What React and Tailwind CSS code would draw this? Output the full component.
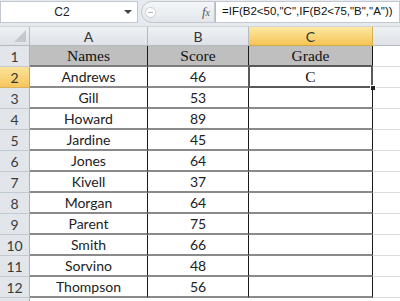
import React from 'react'

const data = [
  ['Andrews', 46, 'C'],
  ['Gill', 53],
  ['Howard', 89],
  ['Jardine', 45],
  ['Jones', 64],
  ['Kivell', 37],
  ['Morgan', 64],
  ['Parent', 75],
  ['Smith', 66],
  ['Sorvino', 48],
  ['Thompson', 56],
]

const sans = { fontFamily: 'Lato, "Liberation Sans", sans-serif' }

function RowHead({ n, active }) {
  return (
    <div
      className={`w-[30px] shrink-0 flex items-center justify-center text-[14px] border-r border-b ${
        active
          ? 'bg-gradient-to-b from-[#fbe39a] to-[#f6c65c] text-[#333] border-r-[#c9a34a] border-b-[#d7b45c]'
          : 'bg-[#e2e6eb] text-[#3a3a3a] border-r-[#a9b1bb] border-b-[#c3c9d0]'
      }`}
    >
      {n}
    </div>
  )
}

export default function App() {
  return (
    <div className="w-[400px] h-[301px] overflow-hidden bg-white text-[#222]" style={sans}>
      {/* formula bar */}
      <div className="h-[27px] bg-[#e6e9ee] flex items-start pt-[1px] border-b border-[#cfd4da]">
        <div className="w-[138px] h-[22px] bg-white border border-[#c2c8cf] flex items-center">
          <div className="flex-1 text-center text-[12px] text-[#222] pl-[2px]" style={{ fontFamily: '"Liberation Sans", sans-serif' }}>C2</div>
          <svg width="14" height="8" viewBox="0 0 14 8" className="mr-[2px]">
            <path d="M3 2 L11 2 L7 6 Z" fill="#444" />
          </svg>
        </div>
        <div className="w-[74px] h-[22px] ml-[3px] flex items-center bg-gradient-to-b from-[#f4f6f8] to-[#e3e7ec] border border-[#c2c8cf] rounded-l-full">
          <div className="w-[11px] h-[11px] ml-[3px] rounded-full border border-[#c9ced4] bg-white flex items-center justify-center">
            <div className="w-[5px] h-[1px] bg-[#b0b6bd]" />
          </div>
          <div className="flex-1" />
          <span className="italic text-[13px] text-[#555] mr-[4px]" style={{ fontFamily: '"Liberation Serif", serif' }}>
            f<span className="text-[10px]">x</span>
          </span>
        </div>
        <div className="flex-1 h-[22px] bg-white border border-[#c2c8cf] border-l-[#b5bbc3] flex items-center pl-[6px]">
          <span className="text-[11.5px] text-[#111] whitespace-nowrap" style={{ fontFamily: '"Liberation Sans", sans-serif' }}>
            =IF(B2&lt;50,"C",IF(B2&lt;75,"B","A"))
          </span>
        </div>
      </div>

      {/* column headers */}
      <div className="flex h-[19px]">
        <div className="w-[30px] shrink-0 bg-gradient-to-b from-[#eef1f4] to-[#dfe3e8] border-r border-b border-r-[#b3bac3] border-b-[#b3bac3] relative">
          <svg width="14" height="14" viewBox="0 0 14 14" className="absolute right-[2px] bottom-[2px]">
            <path d="M13 1 L13 13 L1 13 Z" fill="#c4c9cf" />
          </svg>
        </div>
        {['A', 'B'].map((c, i) => (
          <div
            key={c}
            className={`${i === 0 ? 'w-[118px]' : 'w-[101px]'} shrink-0 flex items-center justify-center text-[14px] text-[#333] bg-gradient-to-b from-[#eef1f4] to-[#dfe3e8] border-r border-b border-r-[#b3bac3] border-b-[#b3bac3]`}
          >
            {c}
          </div>
        ))}
        <div className="w-[124px] shrink-0 flex items-center justify-center text-[14px] text-[#333] bg-gradient-to-b from-[#fde8a2] to-[#f5c452] border-r border-b border-r-[#d6ae52] border-b-[#d2a848]">
          C
        </div>
        <div className="flex-1 bg-gradient-to-b from-[#eef1f4] to-[#dfe3e8] border-b border-[#b3bac3]" />
      </div>

      {/* row 1 header */}
      <div className="flex h-[21px]">
        <RowHead n={1} />
        {['Names', 'Score', 'Grade'].map((t, i) => (
          <div
            key={t}
            className={`${['w-[118px]', 'w-[101px]', 'w-[124px]'][i]} shrink-0 flex items-center justify-center bg-[#bfbfbf] border-r border-r-[#1a1a1a] border-b-2 border-b-[#7d7d7d] text-[15.5px] text-[#111]`}
            style={{ fontFamily: '"Liberation Serif", serif' }}
          >
            {t}
          </div>
        ))}
        <div className="flex-1 border-b border-[#d9dbde]" />
      </div>

      {data.map((r, idx) => {
        const n = idx + 2
        const sel = idx === 0
        return (
          <div key={n} className="flex h-[21px]">
            <RowHead n={n} active={sel} />
            <div className="w-[118px] shrink-0 flex items-center justify-center border-r border-r-[#1a1a1a] border-b-2 border-b-[#8a8a8a] text-[14px]">
              {r[0]}
            </div>
            <div className="w-[101px] shrink-0 flex items-center justify-center border-r border-r-[#1a1a1a] border-b-2 border-b-[#8a8a8a] text-[14px]">
              {r[1]}
            </div>
            <div className="w-[124px] shrink-0 relative flex items-center justify-center border-r border-r-[#1a1a1a] border-b-2 border-b-[#8a8a8a]">
              {sel && (
                <>
                  <div className="absolute left-[-1px] top-[-2px] right-[-1px] bottom-[-2px] border-2 border-[#5a5a5a]" />
                  <div className="absolute right-[-4px] bottom-[-5px] w-[6px] h-[6px] bg-[#222] border border-white" />
                  <span className="text-[15.5px] text-[#111]" style={{ fontFamily: '"Liberation Serif", serif' }}>{r[2]}</span>
                </>
              )}
            </div>
            <div className="flex-1 border-b border-[#d9dbde]" />
          </div>
        )
      })}
      <div className="flex h-[21px]">
        <div className="w-[30px] shrink-0 bg-[#e2e6eb] border-r border-r-[#a9b1bb]" />
        <div className="flex-1" />
      </div>
    </div>
  )
}
